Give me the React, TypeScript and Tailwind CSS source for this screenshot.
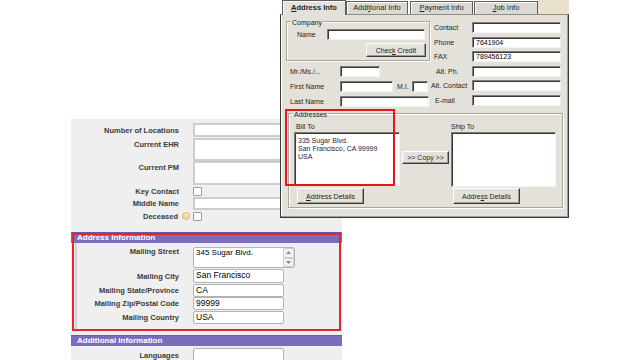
import React from 'react';

type P = { className?: string; children?: React.ReactNode };

// ---- Windows dialog pieces ----
const Field = ({ className = '', children }: P) => (
  <div
    className={`h-[11px] bg-white border border-[#7c7c7c] border-b-[#f2f2f2] border-r-[#f2f2f2] shadow-[inset_1px_1px_0_#383838] pl-[3px] text-[7px] leading-[9px] text-black whitespace-nowrap overflow-hidden ${className}`}
  >
    {children}
  </div>
);

const Button = ({ className = '', children }: P) => (
  <div
    className={`flex items-center justify-center bg-[#e3e1da] border border-white border-b-[#3c3c3c] border-r-[#3c3c3c] shadow-[inset_-1px_-1px_0_#9c9a93] text-[7px] leading-none text-[#1e1e1e] whitespace-nowrap ${className}`}
  >
    {children}
  </div>
);

const GroupBox = ({ title, className = '', children }: P & { title: string }) => (
  <div className={`relative border border-[#a8a69d] shadow-[inset_1px_1px_0_#fff,1px_1px_0_#fff] ${className}`}>
    <span className="absolute left-[4px] top-[-3px] px-[1px] bg-[#e3e1da] text-[7px] leading-[8px]">{title}</span>
    {children}
  </div>
);

const Tab = ({ active, className = '', children }: P & { active?: boolean }) =>
  active ? (
    <div
      className={`relative z-10 -mb-px h-[15px] bg-[#e3e1da] border border-b-0 border-[#5c5c5c] shadow-[inset_1px_1px_0_#fff] font-bold text-[7.5px] flex items-center justify-center ${className}`}
    >
      {children}
    </div>
  ) : (
    <div
      className={`h-[13px] bg-[#dad8d0] border border-b-0 border-[#5c5c5c] shadow-[inset_1px_1px_0_#fff] text-[7.5px] flex items-center justify-center ${className}`}
    >
      {children}
    </div>
  );

const DLabel = ({ className = '', children }: P) => (
  <div className={`text-[7px] leading-[9px] text-[#1e1e1e] whitespace-nowrap ${className}`}>{children}</div>
);

const RightRow = ({ label, value, labelClass = 'ml-[4px] w-[38px]' }: { label: string; value?: string; labelClass?: string }) => (
  <div className="flex items-center h-[11px]">
    <DLabel className={labelClass}>{label}</DLabel>
    <Field className="w-[89px]">{value}</Field>
  </div>
);

const Dialog = () => (
  <div className="absolute left-[280px] top-0 w-[289px] font-['Liberation_Sans',Arial,sans-serif] text-[#1e1e1e]">
    <div className="flex items-end h-[14px]">
      <div className="w-[2px]" />
      <Tab active className="w-[64px]">
        <span><u>A</u>ddress Info</span>
      </Tab>
      <Tab className="w-[62px]">
        <span>Addi<u>t</u>ional Info</span>
      </Tab>
      <div className="w-[2px]" />
      <Tab className="w-[63px]">
        <span><u>P</u>ayment Info</span>
      </Tab>
      <div className="w-[1px]" />
      <Tab className="w-[64px]">
        <span><u>J</u>ob Info</span>
      </Tab>
      <div className="flex-1 h-full bg-[#e9e1cb]" />
    </div>

    <div className="relative h-[204px] bg-[#e3e1da] border border-[#3a3a3a] border-t-[#8e8c85] shadow-[inset_-1px_-1px_0_#a09e97,inset_1px_0_0_#fff]">
      <div className="flex">
        {/* left column */}
        <div className="ml-[5px] w-[144px] pt-[6px]">
          <GroupBox title="Company" className="h-[40px] pt-[7px]">
            <div className="flex items-center ml-[10px]">
              <DLabel className="w-[30px]">Name</DLabel>
              <Field className="w-[98px]" />
            </div>
            <div className="flex justify-end mt-[3px] mr-[3px]">
              <Button className="w-[60px] h-[14px]">
                <span>Chec<u>k</u> Credit</span>
              </Button>
            </div>
          </GroupBox>
          <div className="mt-[5px] flex flex-col gap-[4px]">
            <div className="flex items-center h-[11px]">
              <DLabel className="w-[54px] pl-[4px]">Mr./Ms./...</DLabel>
              <Field className="w-[40px]" />
            </div>
            <div className="flex items-center h-[11px]">
              <DLabel className="w-[54px] pl-[4px]">First Name</DLabel>
              <Field className="w-[53px]" />
              <DLabel className="ml-[4px] w-[15px]">M.I.</DLabel>
              <Field className="w-[16px]" />
            </div>
            <div className="flex items-center h-[11px]">
              <DLabel className="w-[54px] pl-[4px]">Last Name</DLabel>
              <Field className="w-[89px]" />
            </div>
          </div>
        </div>

        {/* right column */}
        <div className="pt-[7px] flex flex-col gap-[3.6px]">
          <RightRow label="Contact" />
          <RightRow label="Phone" value="7641904" />
          <RightRow label="FAX" value="789456123" />
          <RightRow label="Alt. Ph." labelClass="ml-[6px] w-[36px]" />
          <RightRow label="Alt. Contact" labelClass="ml-[1px] w-[41px]" />
          <RightRow label="E-mail" labelClass="ml-[5px] w-[37px]" />
        </div>
      </div>

      <GroupBox title="Addresses" className="ml-[7px] mt-[6px] w-[275px] h-[95px]">
        <div className="flex pt-[8px] pl-[5px]">
          <div className="w-[106px]">
            <DLabel className="pl-[2px] h-[10px] leading-[10px]">Bill To</DLabel>
            <div className="h-[54px] bg-white border border-[#7c7c7c] border-b-[#f2f2f2] border-r-[#f2f2f2] shadow-[inset_1px_1px_0_#383838] pt-[4px] pl-[3px] text-[7px] leading-[8px] text-[#1c1c4a]">
              <div>335 Sugar Blvd.</div>
              <div>San Francisco, CA 99999</div>
              <div>USA</div>
            </div>
            <Button className="mt-[2px] ml-[3px] w-[67px] h-[16px]">
              <span><u>A</u>ddress Details</span>
            </Button>
          </div>
          <Button className="ml-[2px] mt-[29px] w-[47px] h-[13px]">&gt;&gt; Copy &gt;&gt;</Button>
          <div className="ml-[2px] w-[105px]">
            <DLabel className="h-[10px] leading-[10px]">Ship To</DLabel>
            <div className="h-[55px] bg-white border border-[#7c7c7c] border-b-[#f2f2f2] border-r-[#f2f2f2] shadow-[inset_1px_1px_0_#383838]" />
            <Button className="mt-[1px] ml-[2px] w-[67px] h-[16px]">
              <span>Addre<u>s</u>s Details</span>
            </Button>
          </div>
        </div>
      </GroupBox>
    </div>

    {/* annotation around Bill To */}
    <div className="absolute left-[5px] top-[109px] w-[110px] h-[77px] border-2 border-[#e8141b] z-20" />
  </div>
);

// ---- web form pieces ----
const label = 'text-right pr-[14px] font-bold text-[7.5px] leading-[9px] text-[#3a3a3a] whitespace-nowrap';

const WebInput = ({ className = '', children }: P) => (
  <div
    className={`bg-white border border-[#b3b3b3] rounded-[2px] pl-[2px] text-[8.5px] leading-[11px] text-black font-['Liberation_Sans',Arial,sans-serif] whitespace-nowrap overflow-hidden ${className}`}
  >
    {children}
  </div>
);

const Check = () => <div className="w-[9px] h-[9px] bg-white border border-[#9a9a9a] rounded-[1px]" />;

const Help = () => (
  <svg width="8" height="8" viewBox="0 0 8 8" className="shrink-0">
    <circle cx="4" cy="4" r="3.6" fill="#f6cf8c" stroke="#e6ad5c" strokeWidth="0.6" />
    <text x="4" y="6.1" textAnchor="middle" fontSize="6" fontWeight="bold" fill="#fff" fontFamily="Liberation Sans, sans-serif">
      ?
    </text>
  </svg>
);

const SectionHeader = ({ className = '', children }: P) => (
  <div className={`bg-[#7b6cbc] border-t border-[#6858a8] text-white font-bold text-[8px] leading-[10px] pl-[6px] ${className}`}>
    {children}
  </div>
);

const Arrow = ({ up }: { up?: boolean }) => (
  <div className="flex-1 flex items-center justify-center bg-[#f2f2f2] border border-[#cfcfcf] rounded-[1px]">
    <svg width="5" height="3" viewBox="0 0 5 3">
      <polygon points={up ? '0,3 2.5,0 5,3' : '0,0 2.5,3 5,0'} fill="#8a8a8a" />
    </svg>
  </div>
);

const WebForm = () => (
  <div className="pt-[119px] pl-[71px]">
    <div className="w-[271px] bg-[#efefef] font-['Liberation_Sans',Arial,sans-serif]">
      <div className="pt-[4px] pb-[11px] flex flex-col">
        <div className="flex items-center h-[14px]">
          <div className={`w-[122px] ${label}`}>Number of Locations</div>
          <div className="w-[100px] h-[14px] bg-white border-2 border-[#cdcdcd]" />
        </div>
        <div className="flex items-start mt-[1px]">
          <div className={`w-[122px] pt-[2px] ${label}`}>Current EHR</div>
          <div className="w-[100px] h-[23px] bg-white border-2 border-[#cdcdcd]" />
        </div>
        <div className="flex items-start">
          <div className={`w-[122px] pt-[2px] ${label}`}>Current PM</div>
          <div className="w-[100px] h-[24px] bg-white border-2 border-[#cdcdcd]" />
        </div>
        <div className="flex items-center h-[10px] mt-[1px]">
          <div className={`w-[122px] ${label}`}>Key Contact</div>
          <Check />
        </div>
        <div className="flex items-center h-[13px] mt-[1px]">
          <div className={`w-[122px] ${label}`}>Middle Name</div>
          <div className="w-[100px] h-[13px] bg-white border-2 border-[#cdcdcd]" />
        </div>
        <div className="flex items-center h-[10px] mt-[1px]">
          <div className="w-[122px] flex items-center justify-end gap-[4px] pr-[3px]">
            <span className="font-bold text-[7.5px] leading-[9px] text-[#3a3a3a]">Deceased</span>
            <Help />
          </div>
          <Check />
        </div>
      </div>

      <div className="outline-2 outline-[#e3262b] outline-offset-[-3px]">
        <SectionHeader className="h-[11px]">Address Information</SectionHeader>
        <div className="ml-[4px] border-l-2 border-[#d4d4d4] pt-[4px] pb-[8px]">
          <div className="flex items-start">
            <div className={`w-[116px] ${label}`}>Mailing Street</div>
            <div className="w-[102px] h-[21px] flex bg-white border border-[#b3b3b3] rounded-[2px]">
              <div className="flex-1 pl-[2px] text-[8px] leading-[10px] text-black">345 Sugar Blvd.</div>
              <div className="w-[11px] flex flex-col bg-[#f6f6f6]">
                <Arrow up />
                <Arrow />
              </div>
            </div>
          </div>
          <div className="flex items-center mt-[1px]">
            <div className={`w-[116px] ${label}`}>Mailing City</div>
            <WebInput className="w-[91px] h-[14px]">San Francisco</WebInput>
          </div>
          <div className="flex items-center mt-[1px]">
            <div className={`w-[116px] ${label}`}>Mailing State/Province</div>
            <WebInput className="w-[91px] h-[13px]">CA</WebInput>
          </div>
          <div className="flex items-center">
            <div className={`w-[116px] ${label}`}>Mailing Zip/Postal Code</div>
            <WebInput className="w-[91px] h-[13px]">99999</WebInput>
          </div>
          <div className="flex items-center mt-[1px]">
            <div className={`w-[116px] ${label}`}>Mailing Country</div>
            <WebInput className="w-[91px] h-[13px]">USA</WebInput>
          </div>
        </div>
      </div>

      <SectionHeader className="mt-[3px] h-[11px]">Additional Information</SectionHeader>
      <div className="flex items-center mt-[2px] pb-[4px]">
        <div className={`w-[122px] ${label}`}>Languages</div>
        <WebInput className="w-[91px] h-[14px]" />
      </div>
    </div>
  </div>
);

export default function App() {
  return (
    <div className="relative w-[640px] h-[360px] bg-white overflow-hidden">
      <WebForm />
      <Dialog />
    </div>
  );
}
